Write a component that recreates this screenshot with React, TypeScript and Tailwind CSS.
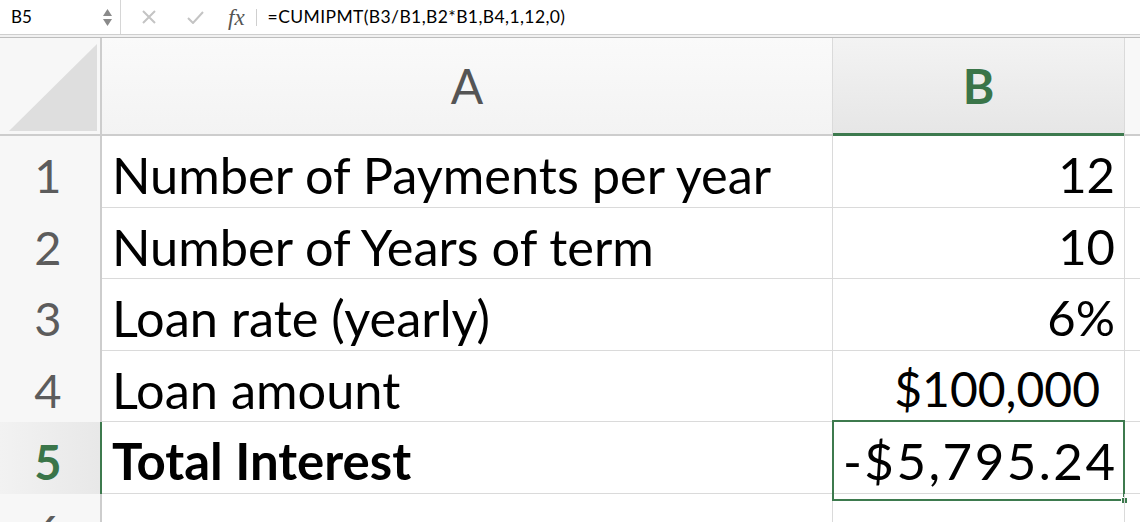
import React from "react";

const FONT = { fontFamily: '"Lato", "Noto Sans", sans-serif' };

const rows = [
  { n: "1", label: "Number of Payments per year", value: "12" },
  { n: "2", label: "Number of Years of term", value: "10" },
  { n: "3", label: "Loan rate (yearly)", value: "6%" },
  { n: "4", label: "Loan amount", value: "$100,000", pad: true },
  { n: "5", label: "Total Interest", value: "-$5,795.24", selected: true },
];

const FormulaBar = () => (
  <div className="flex h-[35px] items-center border-b border-[#cfcfcf] bg-white text-[17px] text-black">
    <div className="flex h-full w-[121px] items-center border-r border-[#d6d6d6] pl-[11px] pr-[8px]">
      <span className="flex-1">B5</span>
      <div className="flex flex-col items-center gap-[3px]">
        <svg width="9" height="7" viewBox="0 0 9 7">
          <path d="M4.5 0 L9 7 L0 7 Z" fill="#8a8a8a" />
        </svg>
        <svg width="9" height="7" viewBox="0 0 9 7">
          <path d="M0 0 L9 0 L4.5 7 Z" fill="#8a8a8a" />
        </svg>
      </div>
    </div>
    <div className="flex h-full items-center">
      <svg className="ml-[21px]" width="14" height="14" viewBox="0 0 14 14">
        <path d="M1 1 L13 13 M13 1 L1 13" stroke="#c4c4c4" strokeWidth="2" />
      </svg>
      <svg className="ml-[31px]" width="17" height="13" viewBox="0 0 17 13">
        <path d="M1 7 L6 12 L16 1" stroke="#c4c4c4" strokeWidth="2" fill="none" />
      </svg>
      <span
        className="ml-[24px] text-[23px] italic leading-none text-[#555]"
        style={{ fontFamily: '"Liberation Serif", "DejaVu Serif", serif' }}
      >
        fx
      </span>
      <div className="ml-[11px] h-[17px] w-px bg-[#cfcfcf]" />
      <span className="ml-[11px] text-[17.5px] tracking-[0.4px]">=CUMIPMT(B3/B1,B2*B1,B4,1,12,0)</span>
    </div>
  </div>
);

const HeaderRow = () => (
  <div className="grid h-[98px] grid-cols-[102px_731px_292px_1fr] border-b-2 border-[#cdcdcd]">
    <div className="flex items-end justify-end border-r-2 border-[#cdcdcd] bg-[#f7f7f7] pb-[3px] pr-[3px]">
      <svg width="88" height="87" viewBox="0 0 88 87">
        <path d="M88 0 L88 87 L0 87 Z" fill="#dedede" />
      </svg>
    </div>
    <div className="flex items-center justify-center border-r border-[#dadada] bg-gradient-to-b from-[#fafafa] to-[#f3f3f3] text-[48px] text-[#555]">
      A
    </div>
    <div className="relative flex items-center justify-center border-r border-[#dadada] bg-gradient-to-b from-[#f3f3f3] to-[#e6e6e6] text-[48px] font-bold text-[#3a7549]">
      B
      <div className="absolute -bottom-[2px] left-0 right-0 h-[3px] bg-[#3d7a4e]" />
    </div>
    <div className="bg-[#f8f8f8]" />
  </div>
);

const DataRow = ({ r }) => (
  <div className="grid h-[71.5px] grid-cols-[102px_731px_292px_1fr] border-b border-[#dadada]">
    <div
      className={
        r.selected
          ? "flex items-center justify-center border-r-2 border-[#3d7a4e] bg-gradient-to-r from-[#f2f2f2] to-[#e8e8e8] pr-[4px] pt-[2px] text-[47px] font-bold text-[#3a7549]"
          : "flex items-center justify-center border-r-2 border-[#cdcdcd] bg-[#f7f7f7] pr-[4px] pt-[2px] text-[47px] text-[#5c5c5c]"
      }
    >
      {r.n}
    </div>
    <div
      className={
        r.selected
          ? "flex items-center border-r border-[#dadada] pl-[10px] pt-[1px] text-[51px] font-bold text-black"
          : "flex items-center border-r border-[#dadada] pl-[10px] pt-[1px] text-[50.5px] text-black"
      }
    >
      {r.label}
    </div>
    <div
      className={
        r.pad
          ? "relative flex items-center justify-end border-r border-[#dadada] pr-[24px] pt-[1px] text-[48px] text-black"
          : r.selected
            ? "relative flex items-center justify-end border-r border-[#dadada] pr-[9px] pt-[1px] text-[51px] tracking-[2.5px] text-black"
            : "relative flex items-center justify-end border-r border-[#dadada] pr-[9px] pt-[1px] text-[49px] text-black"
      }
    >
      <span className={r.selected ? "-mr-[2.5px]" : ""}>{r.value}</span>
      {r.selected && (
        <>
          <div className="pointer-events-none absolute -left-[1px] -right-[1px] -top-[2px] -bottom-[1px] border-2 border-[#3d7a4e]" />
          <div className="absolute -bottom-[4px] -right-[4px] h-[7px] w-[7px] border border-white bg-[#3d7a4e]" />
        </>
      )}
    </div>
    <div />
  </div>
);

export default function App() {
  return (
    <div className="h-[522px] w-[1140px] overflow-hidden bg-white" style={FONT}>
      <FormulaBar />
      <div className="h-[3px] border-b border-[#bdbdbd] bg-[#f1f1f1]" />
      <HeaderRow />
      {rows.map((r) => (
        <DataRow key={r.n} r={r} />
      ))}
      <DataRow r={{ n: "6", label: "", value: "" }} />
    </div>
  );
}
